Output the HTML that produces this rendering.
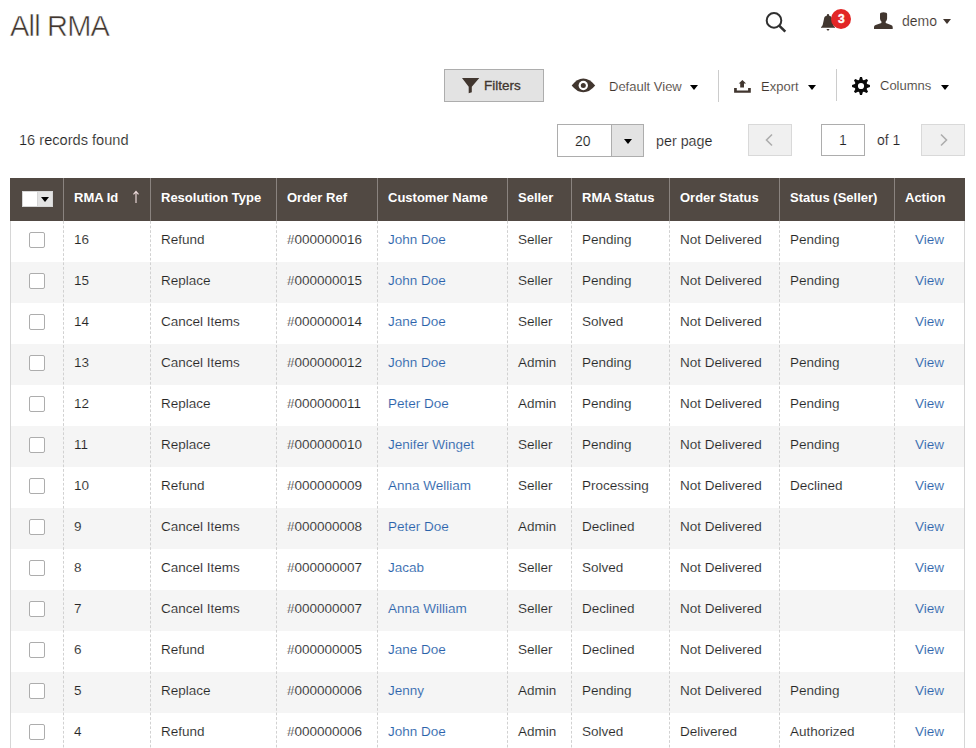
<!DOCTYPE html><html><head><meta charset="utf-8"><style>
*{margin:0;padding:0;box-sizing:border-box}
html,body{width:976px;height:748px;overflow:hidden;background:#fff;font-family:"Liberation Sans",sans-serif;color:#303030}
.a{position:absolute;white-space:nowrap}
.title{left:10px;top:9px;font-size:29px;line-height:34px;color:#41362f;letter-spacing:-0.8px;-webkit-text-stroke:0.5px #fff}
.tb{font-size:13px;color:#41362f;line-height:16px;-webkit-text-stroke:0.15px #fff}
.caret{position:absolute;width:0;height:0;border-left:4px solid transparent;border-right:4px solid transparent;border-top:5px solid #000}
.hd{position:absolute;top:178px;height:43px;background:#514943}
.hdiv{position:absolute;top:178px;height:43px;width:1px;background:#8a837f}
.ht{position:absolute;color:#fff;font-weight:bold;font-size:13px;line-height:16px;top:190px;white-space:nowrap}
.row{position:absolute;left:10px;width:955px;height:41px}
.bd{position:absolute;font-size:13.5px;line-height:16px;white-space:nowrap;color:#262626;-webkit-text-stroke:0.12px #fff}
.lnk{color:#2a62aa}
.dash{position:absolute;width:1px;background-image:linear-gradient(to bottom,#d1d1d1 0,#d1d1d1 50%,transparent 50%);background-size:1px 4.6px}
.cb{position:absolute;width:16px;height:16px;border:1px solid #adadad;border-radius:2px;background:#fff}
</style></head><body>
<div class="a title">All RMA</div>
<svg class="a" style="left:763px;top:9px" width="26" height="26" viewBox="0 0 26 26"><circle cx="11" cy="11.4" r="7.3" fill="none" stroke="#303030" stroke-width="2"/><line x1="16.2" y1="16.6" x2="22.3" y2="22.6" stroke="#303030" stroke-width="2.6"/></svg>
<svg class="a" style="left:815px;top:5px" width="22" height="28" viewBox="0 0 22 28"><circle cx="13" cy="10.2" r="1.2" fill="#41362f"/><path d="M9.2 13 Q9.5 10.8 13 10.8 Q16.5 10.8 16.8 13 L18.2 19.5 Q18.8 21.8 20 22 L20 22.8 L6 22.8 L6 22 Q7.2 21.8 7.8 19.5 Z" fill="#41362f"/><path d="M11.4 24.1 H14.6 L13 25.9 Z" fill="#41362f"/></svg>
<div class="a" style="left:831.3px;top:8.9px;width:20px;height:20px;border-radius:50%;background:#e22626;color:#fff;font-weight:bold;font-size:12px;line-height:20px;text-align:center;-webkit-text-stroke:0.4px #fff">3</div>
<svg class="a" style="left:874px;top:11.5px" width="20" height="18" viewBox="0 0 20 18"><path d="M6 2 Q6 0.2 9.5 0.2 Q13.1 0.2 13.1 2 V6.5 Q13.1 8.5 11.7 9.6 V11 L17 13 Q18.7 13.6 18.7 15 V17.1 H0 V15 Q0 13.6 1.6 13 L7.4 11 V9.6 Q6 8.5 6 6.5 Z" fill="#41362f"/></svg>
<div class="a" style="left:902px;top:13px;font-size:14px;line-height:16px;color:#41362f;-webkit-text-stroke:0.15px #fff">demo</div>
<div class="caret" style="left:943px;top:19px;border-top-color:#41362f"></div>
<div class="a" style="left:444px;top:69px;width:100px;height:33px;background:#e3e3e3;border:1px solid #adadad"></div>
<svg class="a" style="left:461px;top:77px" width="19" height="17" viewBox="0 0 19 17"><path d="M1 0.9 H18.3 L10.8 9.8 V15.3 L7.7 16.2 V9.8 Z" fill="#41362f"/></svg>
<div class="a tb" style="left:484px;top:78px;font-size:13.5px;color:#41362f;-webkit-text-stroke:0.3px #41362f">Filters</div>
<svg class="a" style="left:571px;top:78px" width="25" height="15" viewBox="0 0 25 15"><path d="M0.7 7.5 Q6 0.6 12.3 0.6 Q18.6 0.6 24.2 7.5 Q18.6 14.3 12.3 14.3 Q6 14.3 0.7 7.5 Z" fill="#41362f"/><circle cx="12.3" cy="7.5" r="4.7" fill="#fff"/><circle cx="12.3" cy="7.5" r="2.5" fill="#41362f"/></svg>
<div class="a tb" style="left:609px;top:79px">Default View</div>
<div class="caret" style="left:690px;top:85px"></div>
<div class="a" style="left:718px;top:70px;width:1px;height:32px;background:#ccc"></div>
<svg class="a" style="left:733px;top:79px" width="19" height="15" viewBox="0 0 19 15"><path d="M1.1 9 H3.8 V11.4 H15.1 V9 H17.8 V13.8 H1.1 Z" fill="#41362f"/><path d="M9.4 0.9 L5.7 4.6 H7.2 V8.5 H11 V4.6 H13.1 Z" fill="#41362f"/></svg>
<div class="a tb" style="left:761px;top:79px">Export</div>
<div class="caret" style="left:808px;top:85px"></div>
<div class="a" style="left:836px;top:69px;width:1px;height:32px;background:#ccc"></div>
<svg class="a" style="left:851px;top:76px" width="20" height="20" viewBox="0 0 20 20"><path d="M8.11 3.89 L9.01 1.05 L10.99 1.05 L11.89 3.89 L12.99 4.34 L15.63 2.98 L17.02 4.37 L15.66 7.01 L16.11 8.11 L18.95 9.01 L18.95 10.99 L16.11 11.89 L15.66 12.99 L17.02 15.63 L15.63 17.02 L12.99 15.66 L11.89 16.11 L10.99 18.95 L9.01 18.95 L8.11 16.11 L7.01 15.66 L4.37 17.02 L2.98 15.63 L4.34 12.99 L3.89 11.89 L1.05 10.99 L1.05 9.01 L3.89 8.11 L4.34 7.01 L2.98 4.37 L4.37 2.98 L7.01 4.34Z M13.1 10A3.1 3.1 0 1 0 6.9 10A3.1 3.1 0 1 0 13.1 10Z" fill="#0a0a0a" fill-rule="evenodd"/></svg>
<div class="a tb" style="left:880px;top:78px">Columns</div>
<div class="caret" style="left:941px;top:85px"></div>
<div class="a" style="left:19px;top:132px;font-size:14.6px;line-height:16px;color:#222;-webkit-text-stroke:0.18px #fff">16 records found</div>
<div class="a" style="left:557px;top:124px;width:87px;height:33px;background:#fff;border:1px solid #adadad"></div>
<div class="a" style="left:611px;top:124px;width:33px;height:33px;background:#e3e3e3;border:1px solid #adadad"></div>
<div class="a" style="left:575px;top:133px;font-size:14px;line-height:16px;color:#222;-webkit-text-stroke:0.18px #fff">20</div>
<div class="caret" style="left:624px;top:139px"></div>
<div class="a" style="left:656px;top:133px;font-size:14.3px;line-height:16px;color:#222;-webkit-text-stroke:0.18px #fff">per page</div>
<div class="a" style="left:748px;top:124px;width:44px;height:32px;background:#f0f0f0;border:1px solid #d9d9d9"></div>
<svg class="a" style="left:764px;top:133px" width="10" height="14" viewBox="0 0 10 14"><path d="M8 1.5L2.5 7L8 12.5" fill="none" stroke="#adadad" stroke-width="1.6"/></svg>
<div class="a" style="left:821px;top:124px;width:44px;height:32px;background:#fff;border:1px solid #adadad"></div>
<div class="a" style="left:821px;top:132px;width:44px;text-align:center;font-size:14px;line-height:16px;color:#222;-webkit-text-stroke:0.18px #fff">1</div>
<div class="a" style="left:877px;top:132px;font-size:14px;line-height:16px;color:#222;-webkit-text-stroke:0.18px #fff">of 1</div>
<div class="a" style="left:921px;top:124px;width:44px;height:32px;background:#f0f0f0;border:1px solid #d9d9d9"></div>
<svg class="a" style="left:939px;top:133px" width="10" height="14" viewBox="0 0 10 14"><path d="M2 1.5L7.5 7L2 12.5" fill="none" stroke="#adadad" stroke-width="1.6"/></svg>
<div class="hd" style="left:10px;width:955px"></div>
<div class="hdiv" style="left:63px"></div>
<div class="hdiv" style="left:150px"></div>
<div class="hdiv" style="left:276px"></div>
<div class="hdiv" style="left:377px"></div>
<div class="hdiv" style="left:507px"></div>
<div class="hdiv" style="left:571px"></div>
<div class="hdiv" style="left:669px"></div>
<div class="hdiv" style="left:779px"></div>
<div class="hdiv" style="left:894px"></div>
<div class="ht" style="left:74px">RMA Id</div>
<div class="ht" style="left:161px">Resolution Type</div>
<div class="ht" style="left:287px">Order Ref</div>
<div class="ht" style="left:388px">Customer Name</div>
<div class="ht" style="left:518px">Seller</div>
<div class="ht" style="left:582px">RMA Status</div>
<div class="ht" style="left:680px">Order Status</div>
<div class="ht" style="left:790px">Status (Seller)</div>
<div class="ht" style="left:905px">Action</div>
<svg class="a" style="left:132px;top:190px" width="8" height="14" viewBox="0 0 8 14"><path d="M4 1.3V13M1.5 4.3L4 1.3L6.5 4.3" fill="none" stroke="#ecdada" stroke-width="1.15"/></svg>
<div class="a" style="left:22px;top:191px;width:31px;height:16px;background:#fff;border:1px solid #d6d6d6"></div>
<div class="a" style="left:37px;top:191px;width:16px;height:16px;background:#e3e3e3;border:1px solid #d6d6d6"></div>
<div class="caret" style="left:41px;top:197px;border-left-width:4px;border-right-width:4px;border-top-width:5px"></div>
<div class="row" style="top:221px;background:#fff"></div>
<div class="cb" style="left:29px;top:232px"></div>
<div class="bd" style="left:74px;top:232px">16</div>
<div class="bd" style="left:161px;top:232px">Refund</div>
<div class="bd" style="left:287px;top:232px">#000000016</div>
<div class="bd lnk" style="left:388px;top:232px">John Doe</div>
<div class="bd" style="left:518px;top:232px">Seller</div>
<div class="bd" style="left:582px;top:232px">Pending</div>
<div class="bd" style="left:680px;top:232px">Not Delivered</div>
<div class="bd" style="left:790px;top:232px">Pending</div>
<div class="bd lnk" style="left:894px;width:71px;text-align:center;top:232px">View</div>
<div class="row" style="top:262px;background:#f5f5f5"></div>
<div class="cb" style="left:29px;top:273px"></div>
<div class="bd" style="left:74px;top:273px">15</div>
<div class="bd" style="left:161px;top:273px">Replace</div>
<div class="bd" style="left:287px;top:273px">#000000015</div>
<div class="bd lnk" style="left:388px;top:273px">John Doe</div>
<div class="bd" style="left:518px;top:273px">Seller</div>
<div class="bd" style="left:582px;top:273px">Pending</div>
<div class="bd" style="left:680px;top:273px">Not Delivered</div>
<div class="bd" style="left:790px;top:273px">Pending</div>
<div class="bd lnk" style="left:894px;width:71px;text-align:center;top:273px">View</div>
<div class="row" style="top:303px;background:#fff"></div>
<div class="cb" style="left:29px;top:314px"></div>
<div class="bd" style="left:74px;top:314px">14</div>
<div class="bd" style="left:161px;top:314px">Cancel Items</div>
<div class="bd" style="left:287px;top:314px">#000000014</div>
<div class="bd lnk" style="left:388px;top:314px">Jane Doe</div>
<div class="bd" style="left:518px;top:314px">Seller</div>
<div class="bd" style="left:582px;top:314px">Solved</div>
<div class="bd" style="left:680px;top:314px">Not Delivered</div>
<div class="bd lnk" style="left:894px;width:71px;text-align:center;top:314px">View</div>
<div class="row" style="top:344px;background:#f5f5f5"></div>
<div class="cb" style="left:29px;top:355px"></div>
<div class="bd" style="left:74px;top:355px">13</div>
<div class="bd" style="left:161px;top:355px">Cancel Items</div>
<div class="bd" style="left:287px;top:355px">#000000012</div>
<div class="bd lnk" style="left:388px;top:355px">John Doe</div>
<div class="bd" style="left:518px;top:355px">Admin</div>
<div class="bd" style="left:582px;top:355px">Pending</div>
<div class="bd" style="left:680px;top:355px">Not Delivered</div>
<div class="bd" style="left:790px;top:355px">Pending</div>
<div class="bd lnk" style="left:894px;width:71px;text-align:center;top:355px">View</div>
<div class="row" style="top:385px;background:#fff"></div>
<div class="cb" style="left:29px;top:396px"></div>
<div class="bd" style="left:74px;top:396px">12</div>
<div class="bd" style="left:161px;top:396px">Replace</div>
<div class="bd" style="left:287px;top:396px">#000000011</div>
<div class="bd lnk" style="left:388px;top:396px">Peter Doe</div>
<div class="bd" style="left:518px;top:396px">Admin</div>
<div class="bd" style="left:582px;top:396px">Pending</div>
<div class="bd" style="left:680px;top:396px">Not Delivered</div>
<div class="bd" style="left:790px;top:396px">Pending</div>
<div class="bd lnk" style="left:894px;width:71px;text-align:center;top:396px">View</div>
<div class="row" style="top:426px;background:#f5f5f5"></div>
<div class="cb" style="left:29px;top:437px"></div>
<div class="bd" style="left:74px;top:437px">11</div>
<div class="bd" style="left:161px;top:437px">Replace</div>
<div class="bd" style="left:287px;top:437px">#000000010</div>
<div class="bd lnk" style="left:388px;top:437px">Jenifer Winget</div>
<div class="bd" style="left:518px;top:437px">Seller</div>
<div class="bd" style="left:582px;top:437px">Pending</div>
<div class="bd" style="left:680px;top:437px">Not Delivered</div>
<div class="bd" style="left:790px;top:437px">Pending</div>
<div class="bd lnk" style="left:894px;width:71px;text-align:center;top:437px">View</div>
<div class="row" style="top:467px;background:#fff"></div>
<div class="cb" style="left:29px;top:478px"></div>
<div class="bd" style="left:74px;top:478px">10</div>
<div class="bd" style="left:161px;top:478px">Refund</div>
<div class="bd" style="left:287px;top:478px">#000000009</div>
<div class="bd lnk" style="left:388px;top:478px">Anna Welliam</div>
<div class="bd" style="left:518px;top:478px">Seller</div>
<div class="bd" style="left:582px;top:478px">Processing</div>
<div class="bd" style="left:680px;top:478px">Not Delivered</div>
<div class="bd" style="left:790px;top:478px">Declined</div>
<div class="bd lnk" style="left:894px;width:71px;text-align:center;top:478px">View</div>
<div class="row" style="top:508px;background:#f5f5f5"></div>
<div class="cb" style="left:29px;top:519px"></div>
<div class="bd" style="left:74px;top:519px">9</div>
<div class="bd" style="left:161px;top:519px">Cancel Items</div>
<div class="bd" style="left:287px;top:519px">#000000008</div>
<div class="bd lnk" style="left:388px;top:519px">Peter Doe</div>
<div class="bd" style="left:518px;top:519px">Admin</div>
<div class="bd" style="left:582px;top:519px">Declined</div>
<div class="bd" style="left:680px;top:519px">Not Delivered</div>
<div class="bd lnk" style="left:894px;width:71px;text-align:center;top:519px">View</div>
<div class="row" style="top:549px;background:#fff"></div>
<div class="cb" style="left:29px;top:560px"></div>
<div class="bd" style="left:74px;top:560px">8</div>
<div class="bd" style="left:161px;top:560px">Cancel Items</div>
<div class="bd" style="left:287px;top:560px">#000000007</div>
<div class="bd lnk" style="left:388px;top:560px">Jacab</div>
<div class="bd" style="left:518px;top:560px">Seller</div>
<div class="bd" style="left:582px;top:560px">Solved</div>
<div class="bd" style="left:680px;top:560px">Not Delivered</div>
<div class="bd lnk" style="left:894px;width:71px;text-align:center;top:560px">View</div>
<div class="row" style="top:590px;background:#f5f5f5"></div>
<div class="cb" style="left:29px;top:601px"></div>
<div class="bd" style="left:74px;top:601px">7</div>
<div class="bd" style="left:161px;top:601px">Cancel Items</div>
<div class="bd" style="left:287px;top:601px">#000000007</div>
<div class="bd lnk" style="left:388px;top:601px">Anna William</div>
<div class="bd" style="left:518px;top:601px">Seller</div>
<div class="bd" style="left:582px;top:601px">Declined</div>
<div class="bd" style="left:680px;top:601px">Not Delivered</div>
<div class="bd lnk" style="left:894px;width:71px;text-align:center;top:601px">View</div>
<div class="row" style="top:631px;background:#fff"></div>
<div class="cb" style="left:29px;top:642px"></div>
<div class="bd" style="left:74px;top:642px">6</div>
<div class="bd" style="left:161px;top:642px">Refund</div>
<div class="bd" style="left:287px;top:642px">#000000005</div>
<div class="bd lnk" style="left:388px;top:642px">Jane Doe</div>
<div class="bd" style="left:518px;top:642px">Seller</div>
<div class="bd" style="left:582px;top:642px">Declined</div>
<div class="bd" style="left:680px;top:642px">Not Delivered</div>
<div class="bd lnk" style="left:894px;width:71px;text-align:center;top:642px">View</div>
<div class="row" style="top:672px;background:#f5f5f5"></div>
<div class="cb" style="left:29px;top:683px"></div>
<div class="bd" style="left:74px;top:683px">5</div>
<div class="bd" style="left:161px;top:683px">Replace</div>
<div class="bd" style="left:287px;top:683px">#000000006</div>
<div class="bd lnk" style="left:388px;top:683px">Jenny</div>
<div class="bd" style="left:518px;top:683px">Admin</div>
<div class="bd" style="left:582px;top:683px">Pending</div>
<div class="bd" style="left:680px;top:683px">Not Delivered</div>
<div class="bd" style="left:790px;top:683px">Pending</div>
<div class="bd lnk" style="left:894px;width:71px;text-align:center;top:683px">View</div>
<div class="row" style="top:713px;background:#fff"></div>
<div class="cb" style="left:29px;top:724px"></div>
<div class="bd" style="left:74px;top:724px">4</div>
<div class="bd" style="left:161px;top:724px">Refund</div>
<div class="bd" style="left:287px;top:724px">#000000006</div>
<div class="bd lnk" style="left:388px;top:724px">John Doe</div>
<div class="bd" style="left:518px;top:724px">Admin</div>
<div class="bd" style="left:582px;top:724px">Solved</div>
<div class="bd" style="left:680px;top:724px">Delivered</div>
<div class="bd" style="left:790px;top:724px">Authorized</div>
<div class="bd lnk" style="left:894px;width:71px;text-align:center;top:724px">View</div>
<div class="dash" style="left:63px;top:221px;height:527px"></div>
<div class="dash" style="left:150px;top:221px;height:527px"></div>
<div class="dash" style="left:276px;top:221px;height:527px"></div>
<div class="dash" style="left:377px;top:221px;height:527px"></div>
<div class="dash" style="left:507px;top:221px;height:527px"></div>
<div class="dash" style="left:571px;top:221px;height:527px"></div>
<div class="dash" style="left:669px;top:221px;height:527px"></div>
<div class="dash" style="left:779px;top:221px;height:527px"></div>
<div class="dash" style="left:894px;top:221px;height:527px"></div>
<div class="a" style="left:10px;top:221px;width:1px;height:527px;background:#d6d6d6"></div>
<div class="a" style="left:964px;top:221px;width:1px;height:527px;background:#d6d6d6"></div>
</body></html>
